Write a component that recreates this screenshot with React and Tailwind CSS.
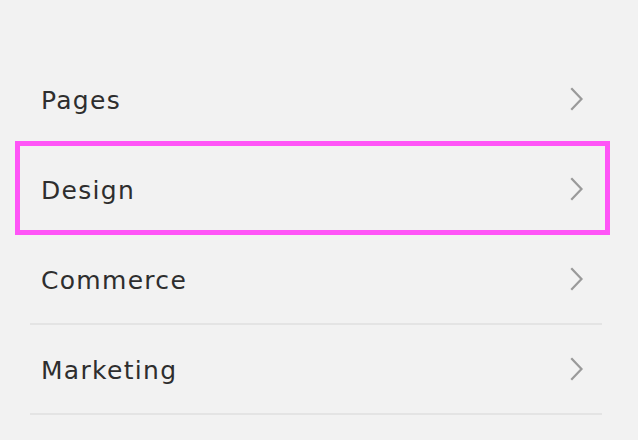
import React from 'react';

const items = ['Pages', 'Design', 'Commerce', 'Marketing'];

function Chevron() {
  return (
    <svg width="14" height="24" viewBox="0 0 14 24" fill="none" className="shrink-0">
      <path d="M2 2l9.5 10L2 22" stroke="#9a9a9a" strokeWidth="2.2" strokeLinecap="square" />
    </svg>
  );
}

export default function App() {
  return (
    <div className="w-[638px] h-[440px] bg-[#f2f2f2] overflow-hidden pt-[55px] pl-[30px] pr-[36px]" style={{ fontFamily: '"DejaVu Sans", "Noto Sans", sans-serif' }}>
      {items.map((label) => (
        <div key={label} className="relative h-[90px] flex items-center justify-between border-b-2 border-[#e4e4e4] pl-[11px] pr-[18px]">
          <span className="text-[25px] leading-none pt-[3px] text-[#2e2e2e] tracking-[1.3px]">{label}</span>
          <Chevron />
          {label === 'Design' && (
            <div className="absolute left-[-15px] right-[-8px] top-[-4px] bottom-[-2px] border-[5px] border-[#ff55f7] pointer-events-none" />
          )}
        </div>
      ))}
    </div>
  );
}
